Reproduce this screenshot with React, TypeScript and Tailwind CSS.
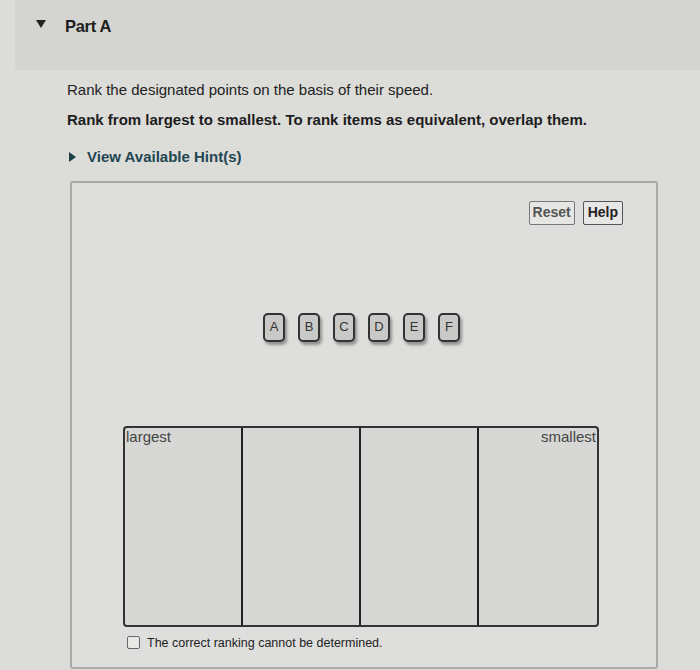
import React from "react";

const font = { fontFamily: '"Liberation Sans", Arial, sans-serif' };

function Tile({ l }: { l: string }) {
  return (
    <div className="w-[22px] h-[29px] rounded-[5px] border-2 border-[#333] bg-[#c9c9c7] shadow-[2px_3px_3px_rgba(0,0,0,0.35)] flex items-center justify-center text-[13px] text-[#333]">
      {l}
    </div>
  );
}

export default function App() {
  return (
    <div style={font} className="w-[700px] h-[670px] bg-[#dcdcd9] overflow-hidden relative">
      <div className="ml-[15px] h-[70px] bg-[#d4d4d1] flex items-start pt-[14px]">
        <svg width="12" height="10" viewBox="0 0 12 10" className="ml-[20px] mt-[5px]">
          <polygon points="1,1 11,1 6,9" fill="#222" />
        </svg>
        <span className="ml-[18px] text-[16.5px] font-bold text-[#1d1d1d] tracking-[-0.3px]">Part A</span>
      </div>
      <div className="pl-[67px] pt-[11px]">
        <p className="text-[15px] text-[#222] leading-[18px]">Rank the designated points on the basis of their speed.</p>
        <p className="mt-[12px] text-[15px] font-bold text-[#1d1d1d] leading-[18px]">Rank from largest to smallest. To rank items as equivalent, overlap them.</p>
        <div className="mt-[17px] flex items-center">
          <svg width="8" height="10" viewBox="0 0 8 10" className="ml-[1px]">
            <polygon points="1,0 8,5 1,10" fill="#1f3f48" />
          </svg>
          <span className="ml-[11px] text-[15px] font-bold text-[#1f4651]">View Available Hint(s)</span>
        </div>
      </div>
      <div className="ml-[70px] mt-[12px] w-[588px] h-[488px] border-2 border-[#a9a9a7] rounded-[3px] bg-[#dededc] relative">
        <div className="flex justify-end gap-[8px] pr-[33px] pt-[18px]">
          <button className="h-[24px] px-[3px] border border-[#777] rounded-[2px] bg-[#e6e6e4] text-[14px] font-bold text-[#555]">Reset</button>
          <button className="h-[24px] px-[4px] border border-[#555] rounded-[2px] bg-[#e6e6e4] text-[14px] font-bold text-[#222]">Help</button>
        </div>
        <div className="mt-[88px] ml-[191px] flex gap-[13px]">
          {["A", "B", "C", "D", "E", "F"].map((l) => (
            <Tile key={l} l={l} />
          ))}
        </div>
        <div className="mt-[84px] ml-[51px] w-[476px] h-[201px] border-2 border-[#333] rounded-[4px] grid grid-cols-4 bg-[#d7d7d5] overflow-hidden">
          <div className="border-r-2 border-[#222] relative">
            <span className="absolute left-[1px] top-0 text-[15px] text-[#444] leading-[17px]">largest</span>
          </div>
          <div className="border-r-2 border-[#222]" />
          <div className="border-r-2 border-[#222]" />
          <div className="relative">
            <span className="absolute right-[1px] top-0 text-[15px] text-[#444] leading-[17px]">smallest</span>
          </div>
        </div>
        <div className="mt-[7px] ml-[55px] flex items-center">
          <div className="w-[13px] h-[13px] border border-[#666] rounded-[2px] bg-[#e8e8e6]" />
          <span className="ml-[7px] text-[12.5px] text-[#222]">The correct ranking cannot be determined.</span>
        </div>
      </div>
    </div>
  );
}
